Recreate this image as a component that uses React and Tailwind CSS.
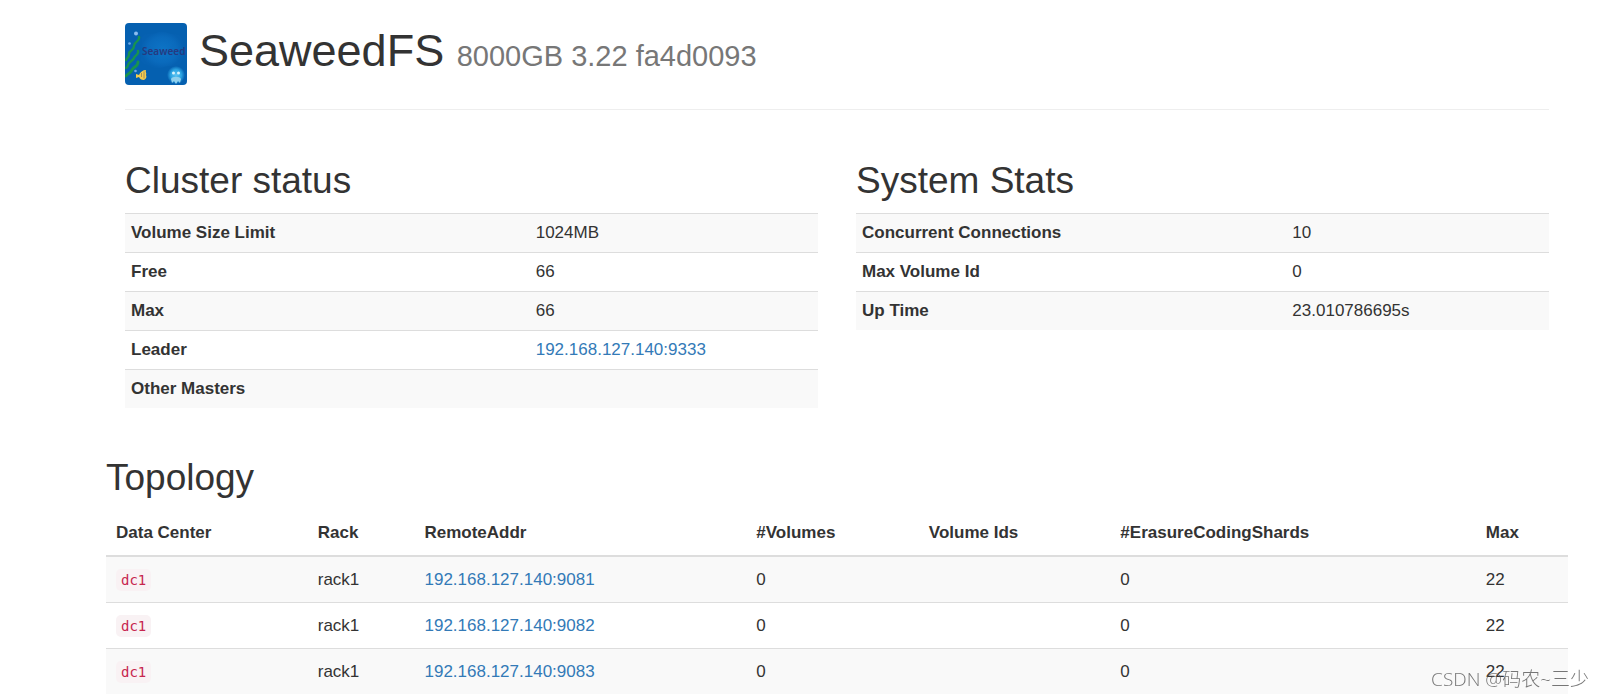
import React from "react";

const clusterStatus = [
  { label: "Volume Size Limit", value: "1024MB" },
  { label: "Free", value: "66" },
  { label: "Max", value: "66" },
  { label: "Leader", value: "192.168.127.140:9333", link: true },
  { label: "Other Masters", value: "" },
];

const systemStats = [
  { label: "Concurrent Connections", value: "10" },
  { label: "Max Volume Id", value: "0" },
  { label: "Up Time", value: "23.010786695s" },
];

const columns = [
  { title: "Data Center", width: "w-[13.8%]" },
  { title: "Rack", width: "w-[7.3%]" },
  { title: "RemoteAddr", width: "w-[22.7%]" },
  { title: "#Volumes", width: "w-[11.8%]" },
  { title: "Volume Ids", width: "w-[13.1%]" },
  { title: "#ErasureCodingShards", width: "w-[25%]" },
  { title: "Max", width: "w-[6.3%]" },
];

const nodes = [
  { dc: "dc1", rack: "rack1", addr: "192.168.127.140:9081", volumes: 0, ids: "", shards: 0, max: 22 },
  { dc: "dc1", rack: "rack1", addr: "192.168.127.140:9082", volumes: 0, ids: "", shards: 0, max: 22 },
  { dc: "dc1", rack: "rack1", addr: "192.168.127.140:9083", volumes: 0, ids: "", shards: 0, max: 22 },
];

const Logo = () => (
  <svg viewBox="0 0 62 62" className="size-[62px] shrink-0" role="img" aria-label="Seaweed">
    <defs>
      <radialGradient id="water">
        <stop offset="0" stopColor="#0d74c6" />
        <stop offset="0.7" stopColor="#0a6abc" />
        <stop offset="1" stopColor="#0661b2" />
      </radialGradient>
      <radialGradient id="jelly">
        <stop offset="0" stopColor="#5cc4f2" />
        <stop offset="0.6" stopColor="#2ba3e2" />
        <stop offset="1" stopColor="#0560b0" />
      </radialGradient>
    </defs>
    <rect width="62" height="62" rx="4" fill="#0560b0" />
    <path d="M17 14c4-5 10-2 14-4s8-2 12 0 10 0 13 4 2 10 2 15 0 11-5 13-10 0-14 2-10 1-14-1-9-2-9-7 1-18 1-22z" fill="url(#water)" />
    <g fill="none" stroke="#18934f" strokeLinecap="round">
      <path d="M14 14c1 5-5 4-5 9s-5 4-5 8-2 3-3 6" strokeWidth="2.4" />
      <path d="M13 28c1 4-3 4-4 7s-5 3-6 7-2 2-2 3" strokeWidth="2.4" />
      <path d="M13 39c0 5-4 4-6 8s-4 3-6 6" strokeWidth="2.8" />
    </g>
    <circle cx="11" cy="10.500" r="2" fill="#8bbdf0" />
    <circle cx="4.500" cy="20.500" r="1.300" fill="#6fa9e6" />
    <circle cx="10.500" cy="48" r="1.300" fill="#6fa9e6" />
    <text x="17" y="32" fontFamily="Noto Sans, sans-serif" fontSize="10" fontWeight="600" fill="#253a80">
      Seaweed
    </text>
    <path d="M11 51l3 1c1-3 4-5 7-5-1 2 1 3 0 5 1 2 0 4-2 5-3 0-4-1-5-3l-3 1z" fill="#f5cb4e" />
    <path d="M16.500 50v4M19 48.500v7" stroke="#9c8a5c" strokeWidth="0.900" />
    <circle cx="51" cy="52" r="9" fill="url(#jelly)" />
    <path d="M46 56c1-3 9-3 10 0l-1 4-2-2-2 3-2-3-2 2z" fill="#8fd0ee" />
    <circle cx="48.500" cy="50" r="1.500" fill="#d8f2fd" />
    <circle cx="53.500" cy="50" r="1.500" fill="#d8f2fd" />
  </svg>
);

const StatTable = ({ title, rows, labelWidth }) => (
  <div>
    <h2 className="mb-2.5 text-[37px] leading-[44px]">{title}</h2>
    <table className="w-full table-fixed">
      <tbody>
        {rows.map((row) => (
          <tr key={row.label} className="border-t border-[#ddd] odd:bg-[#f9f9f9]">
            <th scope="row" className={`${labelWidth} p-1.5 text-left font-bold leading-[26px]`}>
              {row.label}
            </th>
            <td className="p-1.5 leading-[26px]">
              {row.link ? (
                <a href="#leader" className="text-[#337ab7] hover:underline">{row.value}</a>
              ) : (
                row.value
              )}
            </td>
          </tr>
        ))}
      </tbody>
    </table>
  </div>
);

export default function App() {
  return (
    <div className="bg-white pl-[106px] pr-9 pb-1 font-['Liberation_Sans',Arial,sans-serif] text-[17px] text-[#333]">
      <div className="px-[19px]">
        <header className="flex items-start gap-3 border-b border-[#eee] pt-[23px] pb-6">
          <Logo />
          <h1 className="text-[45px] leading-[56px]">
            SeaweedFS <small className="text-[29px] text-[#777]">8000GB 3.22 fa4d0093</small>
          </h1>
        </header>

        <div className="mt-[49px] grid grid-cols-2 items-start gap-[38px]">
          <StatTable title="Cluster status" rows={clusterStatus} labelWidth="w-[58.4%]" />
          <StatTable title="System Stats" rows={systemStats} labelWidth="w-[62.1%]" />
        </div>
      </div>

      <h2 className="mt-12 mb-2.5 text-[37px] leading-[44px]">Topology</h2>
      <table className="w-full table-fixed leading-[25px]">
        <thead>
          <tr className="border-b-2 border-[#ddd]">
            {columns.map((col) => (
              <th key={col.title} scope="col" className={`${col.width} p-2.5 text-left font-bold`}>
                {col.title}
              </th>
            ))}
          </tr>
        </thead>
        <tbody>
          {nodes.map((node) => (
            <tr key={node.addr} className="border-t border-[#ddd] odd:bg-[#f9f9f9]">
              <td className="p-2.5">
                <code className="rounded-[5px] bg-[#f9f2f4] px-[5px] py-[3px] font-['DejaVu_Sans_Mono',monospace] text-[14px] leading-none text-[#c7254e]">
                  {node.dc}
                </code>
              </td>
              <td className="p-2.5">{node.rack}</td>
              <td className="p-2.5">
                <a href={`#${node.addr}`} className="text-[#337ab7] hover:underline">{node.addr}</a>
              </td>
              <td className="p-2.5">{node.volumes}</td>
              <td className="p-2.5">{node.ids}</td>
              <td className="p-2.5">{node.shards}</td>
              <td className="p-2.5">{node.max}</td>
            </tr>
          ))}
        </tbody>
      </table>

      <div className="pointer-events-none fixed right-[15px] bottom-1.5 font-['Open_Sans','Noto_Sans_CJK_SC',sans-serif] text-[19px] leading-[26px] font-light text-[#555]/80">
        CSDN @码农~三少
      </div>
    </div>
  );
}
